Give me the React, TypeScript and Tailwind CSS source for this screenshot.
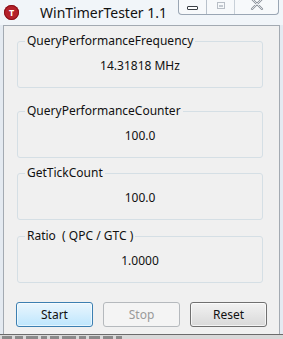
import React from "react";

const font = { fontFamily: '"Noto Sans", "Open Sans", sans-serif' };

function Group({ label, value, mt }: { label: string; value: string; mt: string }) {
  return (
    <div className={`relative h-[47px] w-[246px] rounded-[3px] border border-[#d5dfe5] ${mt}`}>
      <span className="absolute left-[7px] top-[-9px] whitespace-pre bg-[#f0f0f0] px-[2px] text-[12px] leading-[16px] text-[#111]">
        {label}
      </span>
      <div className="flex h-full items-center justify-center pt-[2px] text-[12px] leading-[16px] text-[#111]">
        {value}
      </div>
    </div>
  );
}

export default function App() {
  return (
    <div className="relative flex h-[339px] w-[283px] flex-col overflow-hidden bg-[#e4eaf1]" style={font}>
      {/* title bar */}
      <div className="relative flex h-[25px] shrink-0 items-center bg-[#f1f5f9]">
        <div className="ml-[4px] flex h-[15px] w-[15px] shrink-0 items-center justify-center rounded-full bg-[#b5212a] shadow-[inset_0_0_0_1px_#8a1018]">
          <span className="text-[9px] font-bold leading-none text-white">T</span>
        </div>
        <span className="ml-[21px] text-[14px] leading-none text-[#111]">WinTimerTester 1.1</span>
        <div className="absolute left-[178px] top-0 flex h-[15px] w-[101px] overflow-hidden rounded-b-[4px] border border-t-0 border-[#9aa6b4] bg-[#f7f9fb]">
          <div className="flex h-full w-[28px] shrink-0 items-center justify-center border-r border-[#b8c1cb]">
            <div className="mt-[1px] h-[4px] w-[11px] rounded-[1px] border border-[#3a3f45] bg-white" />
          </div>
          <div className="flex h-full w-[28px] shrink-0 items-start justify-center border-r border-[#c8d0d8] pt-[2px]">
            <div className="flex h-[7px] w-[8px] items-center justify-center border border-[#b8bec6]">
              <div className="h-[2px] w-[4px] border border-[#c4cad1]" />
            </div>
          </div>
          <div className="flex h-full w-[43px] shrink-0 items-start justify-center">
            <svg width="14" height="11" viewBox="0 0 14 11" className="mt-[-1px]">
              <path d="M2 0 L12 10 M12 0 L2 10" stroke="#8c939b" strokeWidth="2.2" fill="none" strokeLinecap="round" />
              <path d="M2 0 L12 10 M12 0 L2 10" stroke="#f3f4f6" strokeWidth="0.8" fill="none" strokeLinecap="round" />
            </svg>
          </div>
        </div>
      </div>

      {/* client area */}
      <div className="mx-[3px] flex h-[309px] shrink-0 flex-col border border-b-0 border-[#a3aab2] bg-[#f0f0f0] pl-[13px]">
        <Group label="QueryPerformanceFrequency" value="14.31818 MHz" mt="mt-[15px]" />
        <Group label="QueryPerformanceCounter" value="100.0" mt="mt-[23px]" />
        <Group label="GetTickCount" value="100.0" mt="mt-[15px]" />
        <Group label="Ratio  ( QPC / GTC )" value="1.0000" mt="mt-[16px]" />
        <div className="mt-[19px] ml-[-1px] flex gap-[10px]">
          <div className="flex h-[25px] w-[77px] items-center justify-center rounded-[3px] border border-[#3c7fb1] bg-gradient-to-b from-[#eaf6fd] to-[#bee6fd] text-[12px] text-[#111] shadow-[inset_0_0_0_1px_rgba(255,255,255,0.6)]">
            Start
          </div>
          <div className="flex h-[25px] w-[77px] items-center justify-center rounded-[3px] border border-[#b5b9bd] bg-[#f4f4f4] text-[12px] text-[#9a9a9a]">
            Stop
          </div>
          <div className="flex h-[25px] w-[77px] items-center justify-center rounded-[3px] border border-[#707070] bg-gradient-to-b from-[#f2f2f2] to-[#d9d9d9] text-[12px] text-[#111] shadow-[inset_0_0_0_1px_rgba(255,255,255,0.7)]">
            Reset
          </div>
        </div>
      </div>

      {/* bottom desktop strip */}
      <div className="h-[1px] shrink-0 bg-[#6b6b6b]" />
      <div className="flex flex-1 items-start gap-[3px] bg-[#d8d8d8] pl-[2px] pt-[1px]">
        {[10, 8, 12, 6, 9, 14, 7, 11, 10, 6].map((w, i) => (
          <div key={i} className="h-[3px] bg-[#8a8a8a]" style={{ width: w }} />
        ))}
      </div>
    </div>
  );
}
